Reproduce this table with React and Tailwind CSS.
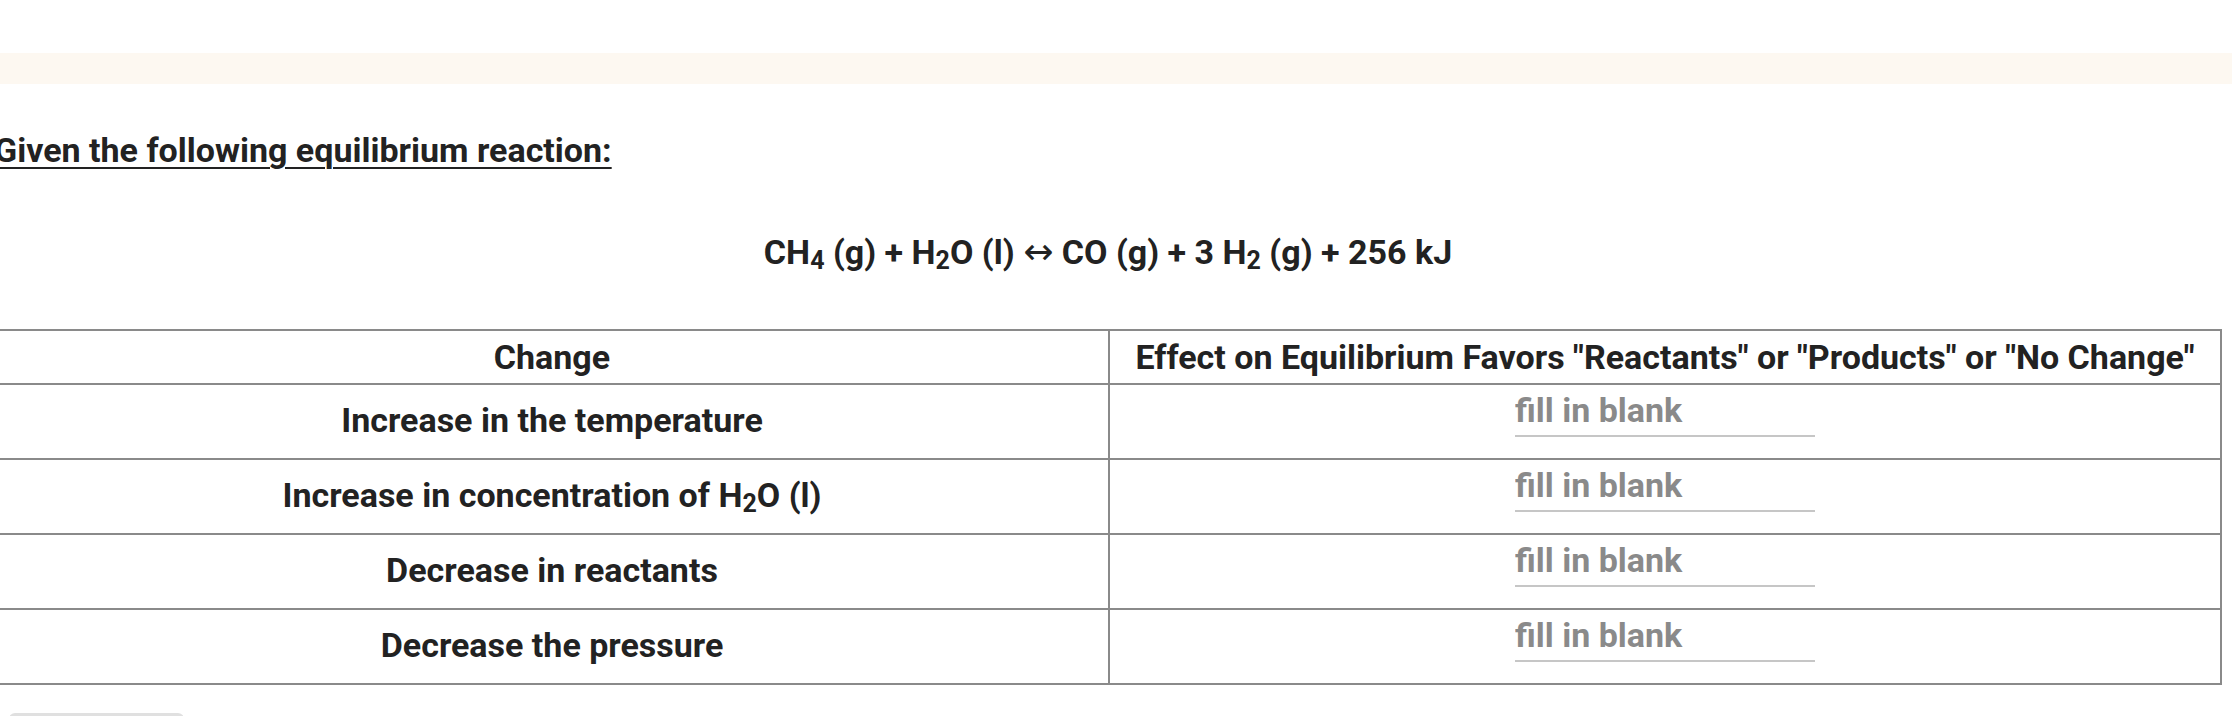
import React from "react";

const Sub = ({ children }) => (
  <sub className="relative top-[5px] text-[25px] align-baseline">{children}</sub>
);

const rows = [
  { label: <>Increase in the temperature</> },
  {
    label: (
      <>
        Increase in concentration of H<Sub>2</Sub>O (l)
      </>
    ),
  },
  { label: <>Decrease in reactants</> },
  { label: <>Decrease the pressure</> },
];

export default function App() {
  return (
    <div
      className="w-[2232px] h-[716px] overflow-hidden bg-white text-[#222222]"
      style={{ fontFamily: "Roboto, 'Liberation Sans', sans-serif" }}
    >
      <div className="h-[53px]" />
      <div className="h-[31px] bg-[#fdf8f1]" />
      <div className="ml-[-6px] w-[2228px]">
        <h2 className="mt-[46px] text-[34px] leading-[40px] font-bold underline decoration-2 underline-offset-[5px]">
          Given the following equilibrium reaction:
        </h2>
        <p className="mt-[62px] text-center text-[34px] leading-[40px] font-bold">
          CH<Sub>4</Sub> (g) + H<Sub>2</Sub>O (l){" "}
          <span className="font-normal text-[36px]" style={{ fontFamily: "'DejaVu Sans', sans-serif" }}>↔</span>{" "}
          CO (g) + 3 H<Sub>2</Sub> (g) + 256 kJ
        </p>
        <table className="mt-[57px] w-full border-collapse text-[34px] font-bold">
          <thead>
            <tr className="h-[54px]">
              <th className="w-[1114px] border-2 border-[#8a8a8a] leading-[40px] font-bold">
                Change
              </th>
              <th className="border-2 border-[#8a8a8a] leading-[40px] font-bold">
                Effect on Equilibrium Favors "Reactants" or "Products" or "No Change"
              </th>
            </tr>
          </thead>
          <tbody>
            {rows.map((r, i) => (
              <tr key={i} className="h-[75px]">
                <td className="border-2 border-[#8a8a8a] text-center leading-[40px] pb-[3px]">
                  {r.label}
                </td>
                <td className="border-2 border-[#8a8a8a] text-center align-top">
                  <input
                    type="text"
                    placeholder="fill in blank"
                    className="mt-0 w-[300px] h-[51px] border-b-2 border-[#c6c6c6] bg-transparent text-[34px] font-bold text-[#222222] placeholder:text-[#8a8a8a] outline-none"
                  />
                </td>
              </tr>
            ))}
          </tbody>
        </table>
        <button className="mt-[28px] ml-[15px] w-[175px] h-[36px] rounded-[6px] bg-[#e0e0e0]" />
      </div>
    </div>
  );
}
